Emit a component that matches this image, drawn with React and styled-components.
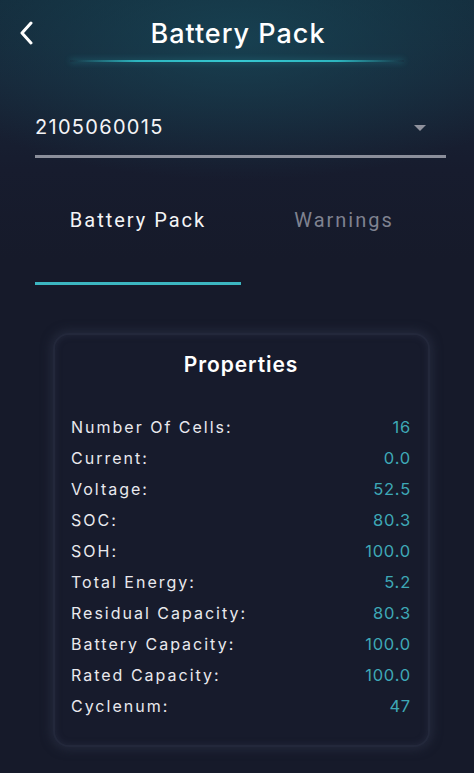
import React, { useState } from 'react';
import styled, { createGlobalStyle } from 'styled-components';

const properties = [
	{ label: 'Number Of Cells:', value: '16' },
	{ label: 'Current:', value: '0.0' },
	{ label: 'Voltage:', value: '52.5' },
	{ label: 'SOC:', value: '80.3' },
	{ label: 'SOH:', value: '100.0' },
	{ label: 'Total Energy:', value: '5.2' },
	{ label: 'Residual Capacity:', value: '80.3' },
	{ label: 'Battery Capacity:', value: '100.0' },
	{ label: 'Rated Capacity:', value: '100.0' },
	{ label: 'Cyclenum:', value: '47' },
];

const App = () => {
	const [tab, setTab] = useState('pack');

	return (
		<>
			<GlobalStyle />
			<Screen>
				<Header>
					<BackButton aria-label='Back'>
						<svg width='18' height='24' viewBox='0 0 18 24'>
							<path
								d='M13 2 L4 12 L13 22'
								fill='none'
								stroke='#fff'
								strokeWidth='3'
								strokeLinecap='round'
								strokeLinejoin='round'
							/>
						</svg>
					</BackButton>
					<Title>Battery Pack</Title>
					<span />
				</Header>
				<GlowLine />

				<Dropdown>
					<DropdownValue>2105060015</DropdownValue>
					<Caret />
				</Dropdown>

				<Tabs>
					<Tab onClick={() => setTab('pack')}>
						<TabLabel $active={tab === 'pack'}>Battery Pack</TabLabel>
						<Indicator $active={tab === 'pack'} />
					</Tab>
					<Tab onClick={() => setTab('warn')}>
						<TabLabel $active={tab === 'warn'}>Warnings</TabLabel>
						<Indicator $active={tab === 'warn'} />
					</Tab>
				</Tabs>

				<Card>
					<CardTitle>Properties</CardTitle>
					<List>
						{properties.map((p) => (
							<Row key={p.label}>
								<Label>{p.label}</Label>
								<Value>{p.value}</Value>
							</Row>
						))}
					</List>
				</Card>
			</Screen>
		</>
	);
};

const GlobalStyle = createGlobalStyle`
	html, body {
		margin: 0;
		padding: 0;
		background: #161a2a;
	}
	* {
		box-sizing: border-box;
	}
`;

const Screen = styled.div`
	width: 474px;
	height: 773px;
	overflow: hidden;
	display: flex;
	flex-direction: column;
	font-family: 'Inter', 'Noto Sans', sans-serif;
	color: #f2f2f5;
	background:
		radial-gradient(ellipse 340px 140px at 240px 40px, rgba(24, 74, 90, 0.7), rgba(24, 74, 90, 0) 100%),
		linear-gradient(180deg, #142a3a 0px, #172436 80px, #171c2e 170px, #161a2a 260px);
`;

const Header = styled.div`
	display: grid;
	grid-template-columns: 1fr auto 1fr;
	align-items: center;
	height: 60px;
	padding: 6px 16px 0 18px;
`;

const BackButton = styled.button`
	justify-self: start;
	background: none;
	border: none;
	padding: 0;
	width: 20px;
	height: 24px;
	cursor: pointer;
	display: flex;
	align-items: center;
`;

const Title = styled.h1`
	margin: 0;
	font-size: 27px;
	font-weight: 500;
	letter-spacing: 1px;
	color: #ffffff;
`;

const GlowLine = styled.div`
	width: 334px;
	height: 2px;
	margin: 0 auto;
	background: linear-gradient(
		90deg,
		rgba(47, 195, 204, 0) 0%,
		rgba(47, 195, 204, 0.9) 20%,
		#37c9d2 50%,
		rgba(47, 195, 204, 0.9) 80%,
		rgba(47, 195, 204, 0) 100%
	);
	box-shadow: 0 0 6px rgba(47, 195, 204, 0.45);
`;

const Dropdown = styled.div`
	display: flex;
	align-items: center;
	justify-content: space-between;
	margin: 53px 28px 0 35px;
	padding: 0 20px 16px 0;
	border-bottom: 3px solid #8b8e9a;
`;

const DropdownValue = styled.span`
	font-size: 20px;
	font-weight: 400;
	letter-spacing: 1.3px;
	color: #f4f4f6;
`;

const Caret = styled.span`
	width: 0;
	height: 0;
	border-left: 6px solid transparent;
	border-right: 6px solid transparent;
	border-top: 6px solid #8f929d;
	margin-top: 2px;
`;

const Tabs = styled.div`
	display: grid;
	grid-template-columns: 206px 206px;
	margin: 50px 0 0 35px;
`;

const Tab = styled.div`
	display: flex;
	flex-direction: column;
	align-items: center;
	cursor: pointer;
`;

const TabLabel = styled.span`
	font-family: 'Roboto', sans-serif;
	font-size: 20px;
	font-weight: 400;
	letter-spacing: 2px;
	line-height: 24px;
	color: ${(p) => (p.$active ? '#f4f4f6' : '#7f8290')};
`;

const Indicator = styled.span`
	align-self: stretch;
	height: 3px;
	margin-top: 50px;
	background: ${(p) => (p.$active ? '#3cb6c1' : 'transparent')};
`;

const Card = styled.div`
	margin: 48px 44px 0 53px;
	padding: 16px 17px 24px 16px;
	border-radius: 16px;
	background: #171b2c;
	border: 2px solid #23283b;
	box-shadow:
		0 0 10px 3px rgba(40, 46, 66, 0.7),
		inset 0 0 6px rgba(45, 50, 72, 0.6);
`;

const CardTitle = styled.h2`
	margin: 0;
	text-align: center;
	font-size: 21px;
	font-weight: 600;
	letter-spacing: 0.9px;
	line-height: 28px;
	color: #ffffff;
`;

const List = styled.div`
	display: flex;
	flex-direction: column;
	margin-top: 32px;
`;

const Row = styled.div`
	display: flex;
	align-items: center;
	justify-content: space-between;
	height: 31px;
`;

const Label = styled.span`
	font-size: 16px;
	font-weight: 400;
	letter-spacing: 2px;
	color: #e9e9ee;
`;

const Value = styled.span`
	font-size: 16.5px;
	font-weight: 400;
	letter-spacing: 0.8px;
	color: #3ea8b6;
`;

export default App;
